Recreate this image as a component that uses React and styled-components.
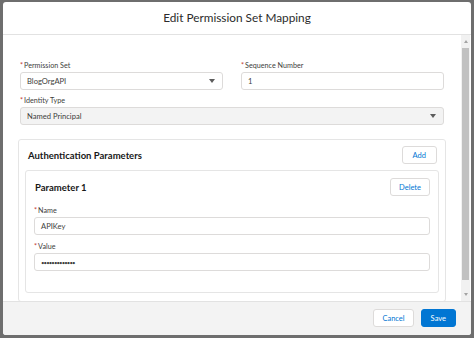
import React from 'react';
import styled, { createGlobalStyle } from 'styled-components';

const GlobalStyle = createGlobalStyle`
  html, body {
    margin: 0;
    padding: 0;
    background: #6e6e6e;
    font-family: Lato, 'Open Sans', sans-serif;
  }
  * { box-sizing: border-box; }
`;

const Backdrop = styled.div`
  width: 474px;
  height: 338px;
  padding: 2px 3px 3px 3px;
  background: #6e6e6e;
`;

const Modal = styled.div`
  width: 468px;
  height: 333px;
  background: #fff;
  border-radius: 3px;
  display: flex;
  flex-direction: column;
  overflow: hidden;
`;

const Header = styled.header`
  height: 33px;
  flex: none;
  border-bottom: 1px solid #e2e2e2;
  display: flex;
  align-items: center;
  justify-content: center;
  h2 {
    margin: 0 0 1px;
    font-weight: 400;
    font-size: 11.8px;
    color: #2b2b2b;
  }
`;

const Body = styled.div`
  flex: 1;
  display: flex;
  min-height: 0;
`;

const Content = styled.div`
  flex: 1;
  padding: 26px 17px 0 17px;
  overflow: hidden;
`;

const Scrollbar = styled.div`
  width: 9px;
  flex: none;
  background: #f1f1f1;
  display: flex;
  flex-direction: column;
  align-items: center;
  padding: 3px 0;
  margin-right: 1px;
`;

const Arrow = styled.div`
  width: 0;
  height: 0;
  border-left: 2.5px solid transparent;
  border-right: 2.5px solid transparent;
  ${(p) => (p.down ? 'border-top: 3px solid #a3a3a3;' : 'border-bottom: 3px solid #a3a3a3;')}
  margin: 2px 0;
`;

const Thumb = styled.div`
  width: 7px;
  flex: 1;
  margin: 3px 0 11px;
  background: #c1c1c1;
`;

const Grid = styled.div`
  display: grid;
  grid-template-columns: ${(p) => (p.cols === 2 ? '1fr 1fr' : '1fr')};
  column-gap: 18px;
  row-gap: ${(p) => p.gap || 8}px;
  margin-bottom: ${(p) => p.mb || 0}px;
`;

const Field = styled.div`
  display: flex;
  flex-direction: column;
`;

const Label = styled.label`
  font-size: 7.2px;
  color: #3e3e3c;
  line-height: 9px;
  margin-bottom: 2px;
  span {
    color: #c23934;
    margin-right: 1px;
  }
`;

const Input = styled.div`
  height: 18px;
  border: 1px solid #dddbda;
  border-radius: 3px;
  background: ${(p) => (p.disabled ? '#f3f3f3' : '#fff')};
  display: flex;
  align-items: center;
  justify-content: space-between;
  padding: 0 7px 0 6px;
  font-size: ${(p) => (p.password ? '6px' : '7.6px')};
  color: #3e3e3c;
  letter-spacing: ${(p) => (p.password ? '-0.9px' : '0')};
`;

const Caret = styled.span`
  width: 0;
  height: 0;
  border-left: 3px solid transparent;
  border-right: 3px solid transparent;
  border-top: 4px solid #5c5c5c;
`;

const Card = styled.div`
  border: 1px solid #e5e5e5;
  border-radius: 3px;
  padding: ${(p) => (p.inner ? '7px 8px 21px 8px' : '6px 6px 8px 6px')};
  margin: ${(p) => (p.inner ? '0' : '0 -2px')};
  background: #fff;
`;

const CardHead = styled.div`
  display: flex;
  align-items: center;
  justify-content: space-between;
  padding: ${(p) => (p.inner ? '0 0 0 1px' : '0 2px 0 3px')};
  margin-bottom: ${(p) => (p.inner ? '10px' : '6px')};
  h3 {
    margin: 0;
    font-size: 9.5px;
    font-weight: 700;
    color: #181818;
  }
`;

const Button = styled.button`
  height: 18px;
  padding: 0 ${(p) => (p.pad || 9)}px;
  border-radius: 3px;
  border: 1px solid ${(p) => (p.primary ? '#0176d3' : '#dddbda')};
  background: ${(p) => (p.primary ? '#0176d3' : '#fff')};
  color: ${(p) => (p.primary ? '#fff' : '#0176d3')};
  font-family: Lato, 'Open Sans', sans-serif;
  font-size: 7.5px;
  cursor: pointer;
`;

const Footer = styled.footer`
  height: 34px;
  flex: none;
  background: #f3f3f3;
  border-top: 1px solid #e2e2e2;
  display: flex;
  align-items: center;
  justify-content: flex-end;
  gap: 7px;
  padding: 0 15px 1px 0;
`;

const Req = () => <span>*</span>;

export default function App() {
  return (
    <>
      <GlobalStyle />
      <Backdrop>
        <Modal>
          <Header>
            <h2>Edit Permission Set Mapping</h2>
          </Header>
          <Body>
            <Content>
              <Grid cols={2} mb={6}>
                <Field>
                  <Label><Req />Permission Set</Label>
                  <Input>BlogOrgAPI<Caret /></Input>
                </Field>
                <Field>
                  <Label><Req />Sequence Number</Label>
                  <Input>1</Input>
                </Field>
              </Grid>
              <Grid mb={14}>
                <Field>
                  <Label><Req />Identity Type</Label>
                  <Input disabled>Named Principal<Caret /></Input>
                </Field>
              </Grid>
              <Card>
                <CardHead>
                  <h3>Authentication Parameters</h3>
                  <Button pad={10}>Add</Button>
                </CardHead>
                <Card inner>
                  <CardHead inner>
                    <h3>Parameter 1</h3>
                    <Button pad={8}>Delete</Button>
                  </CardHead>
                  <Grid gap={7}>
                    <Field>
                      <Label><Req />Name</Label>
                      <Input>APIKey</Input>
                    </Field>
                    <Field>
                      <Label><Req />Value</Label>
                      <Input password>•••••••••••••</Input>
                    </Field>
                  </Grid>
                </Card>
              </Card>
            </Content>
            <Scrollbar>
              <Arrow />
              <Thumb />
              <Arrow down />
            </Scrollbar>
          </Body>
          <Footer>
            <Button pad={8}>Cancel</Button>
            <Button primary pad={9}>Save</Button>
          </Footer>
        </Modal>
      </Backdrop>
    </>
  );
}
